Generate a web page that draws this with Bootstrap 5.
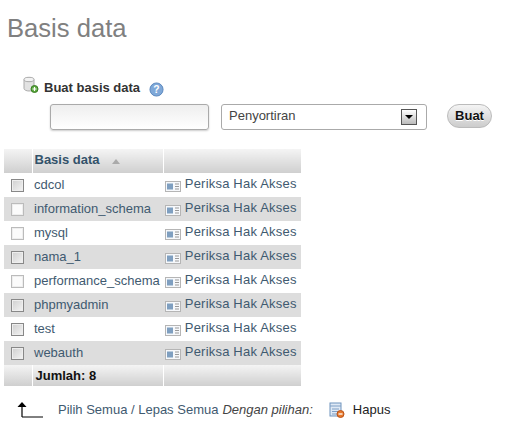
<!DOCTYPE html>
<html lang="id">
<head>
<meta charset="utf-8">
<title>Basis data</title>
<link href="https://cdn.jsdelivr.net/npm/bootstrap@5.3.0/dist/css/bootstrap.min.css" rel="stylesheet">
<style>
html,body{margin:0;background:#fff;overflow:hidden}
body{font-family:"Liberation Sans",Arial,sans-serif;font-size:13px;color:#222;height:429px;width:523px}
.pagebox{padding:13px 0 0 7px}
.pagetitle{font-size:25.6px;line-height:30px;font-weight:400;color:#808080;margin:0}
.createhead{margin:34px 0 0 16px;height:22px;gap:5px;font-weight:700;color:#333}
.dbicon{margin-top:-6px}
.helpicon{margin:3px 0 0 4px}
.createrow{margin:4px 0 0 43px;height:27px}
.dbname{width:159px;height:26px;border:1px solid #aaa;border-radius:3px;background:linear-gradient(#eee,#fff);box-shadow:0 1px 2px #ccc;padding:0 4px;margin-right:12px}
.collation{width:206px;height:26px;border:1px solid #aaa;border-radius:3px;padding:0 7px 2px;color:#444;justify-content:space-between}
.arrowbox{width:16px;height:16px;border:1px solid #555;background:linear-gradient(#fff,#bbb);margin:2px 2px 0 0}
.arrowtip{width:0;height:0;border-left:4px solid transparent;border-right:4px solid transparent;border-top:4px solid #000}
.gobtn{margin:-1px 0 0 20px;width:45px;height:24px;border:1px solid #bbb;border-radius:12px;background:linear-gradient(#f4f4f4,#ccc);font-weight:700;font-size:13px;color:#111;padding:0;line-height:20px;text-shadow:0 1px 0 #fff}
.dbtable{margin:19px 0 0 -3px;width:297px;border-collapse:collapse;table-layout:fixed;color:#3f5a70}
.tickcol{width:28px}
.namecol{width:131px}
.dbtable th{background:linear-gradient(#f4f4f4,#cfcfcf);border-right:1px solid #fff;padding:0 0 0 3px;font-size:13px;vertical-align:middle}
.dbtable td{height:24px;padding:0 0 0 2px;vertical-align:middle;white-space:nowrap}
.dbtable th:last-child{border-right:0}
.dbtable thead th{height:24px;padding-bottom:3px}
.dbtable thead .colname{padding-left:2px;color:#33526a}
.dbtable tfoot th{height:21px;color:#111}
.dbtable .linkcell{padding-bottom:2px;letter-spacing:.2px}
.cardimg{vertical-align:-4px}
.evenrow td{background:#ddd}
.tick{display:block;margin-left:5px;width:13px;height:13px;border:1px solid #888;background:linear-gradient(135deg,#cfcfcf,#f4f4f4);box-shadow:inset 0 0 0 1px #eee}
.tick.soft{border-color:#bbb;background:#fbfbfb}
.sorttip{display:inline-block;margin-left:9px;width:0;height:0;border-left:4px solid transparent;border-right:4px solid transparent;border-bottom:5px solid #aaa}
.bottomrow{margin:13px 0 0 8px;height:22px;color:#3f5a70}
.bottomrow em{color:#444;margin-left:4px}
.hapus{color:#222;margin-left:8px}
.arrowimg{margin-right:15px}
.trashimg{margin-left:16px}
</style>
</head>
<body>
<div class="pagebox">
  <h1 class="pagetitle">Basis data</h1>
  <div class="createhead d-flex align-items-center">
    <svg class="dbicon" width="16" height="18" viewBox="0 0 16 18"><path d="M1 3.500v9c0 1.500 2.500 2.500 5 2.500s5-1 5-2.500v-9z" fill="#e2e2e2" stroke="#aaa"/><ellipse cx="6" cy="3.500" rx="5" ry="2.200" fill="#f2f2f2" stroke="#aaa"/><circle cx="11.500" cy="13" r="3.500" fill="#5aa83c" stroke="#3a7d24"/><path d="M9.500 13h4M11.500 11v4" stroke="#fff" stroke-width="1.200"/></svg>
    <span>Buat basis data</span>
    <svg class="helpicon" width="15" height="15" viewBox="0 0 16 16"><circle cx="8" cy="8" r="7" fill="#7fa8d8" stroke="#5a86bd"/><text x="8" y="12" text-anchor="middle" font-size="11" font-weight="700" font-family="Liberation Sans" fill="#fff">?</text></svg>
  </div>
  <div class="createrow d-flex align-items-center">
    <div class="dbname"></div>
    <div class="collation d-flex align-items-center"><span>Penyortiran</span><span class="arrowbox d-flex align-items-center justify-content-center"><span class="arrowtip"></span></span></div>
    <button type="button" class="gobtn">Buat</button>
  </div>
  <table class="dbtable">
    <colgroup><col class="tickcol"><col class="namecol"><col></colgroup>
    <thead><tr><th></th><th class="colname">Basis data <span class="sorttip"></span></th><th></th></tr></thead>
    <tbody>
      <tr><td><span class="tick"></span></td><td>cdcol</td><td class="linkcell"><svg class="cardimg" width="16" height="11" viewBox="0 0 16 11"><rect x=".5" y=".5" width="15" height="10" fill="#f6f8fb" stroke="#b5b5b5"/><rect x="2" y="2.500" width="6" height="6" fill="#7f9fc0"/><path d="M10 3h4M10 5.500h4M10 8h4" stroke="#999"/></svg> Periksa Hak Akses</td></tr>
      <tr class="evenrow"><td><span class="tick soft"></span></td><td>information_schema</td><td class="linkcell"><svg class="cardimg" width="16" height="11" viewBox="0 0 16 11"><rect x=".5" y=".5" width="15" height="10" fill="#f6f8fb" stroke="#b5b5b5"/><rect x="2" y="2.500" width="6" height="6" fill="#7f9fc0"/><path d="M10 3h4M10 5.500h4M10 8h4" stroke="#999"/></svg> Periksa Hak Akses</td></tr>
      <tr><td><span class="tick soft"></span></td><td>mysql</td><td class="linkcell"><svg class="cardimg" width="16" height="11" viewBox="0 0 16 11"><rect x=".5" y=".5" width="15" height="10" fill="#f6f8fb" stroke="#b5b5b5"/><rect x="2" y="2.500" width="6" height="6" fill="#7f9fc0"/><path d="M10 3h4M10 5.500h4M10 8h4" stroke="#999"/></svg> Periksa Hak Akses</td></tr>
      <tr class="evenrow"><td><span class="tick"></span></td><td>nama_1</td><td class="linkcell"><svg class="cardimg" width="16" height="11" viewBox="0 0 16 11"><rect x=".5" y=".5" width="15" height="10" fill="#f6f8fb" stroke="#b5b5b5"/><rect x="2" y="2.500" width="6" height="6" fill="#7f9fc0"/><path d="M10 3h4M10 5.500h4M10 8h4" stroke="#999"/></svg> Periksa Hak Akses</td></tr>
      <tr><td><span class="tick soft"></span></td><td>performance_schema</td><td class="linkcell"><svg class="cardimg" width="16" height="11" viewBox="0 0 16 11"><rect x=".5" y=".5" width="15" height="10" fill="#f6f8fb" stroke="#b5b5b5"/><rect x="2" y="2.500" width="6" height="6" fill="#7f9fc0"/><path d="M10 3h4M10 5.500h4M10 8h4" stroke="#999"/></svg> Periksa Hak Akses</td></tr>
      <tr class="evenrow"><td><span class="tick"></span></td><td>phpmyadmin</td><td class="linkcell"><svg class="cardimg" width="16" height="11" viewBox="0 0 16 11"><rect x=".5" y=".5" width="15" height="10" fill="#f6f8fb" stroke="#b5b5b5"/><rect x="2" y="2.500" width="6" height="6" fill="#7f9fc0"/><path d="M10 3h4M10 5.500h4M10 8h4" stroke="#999"/></svg> Periksa Hak Akses</td></tr>
      <tr><td><span class="tick"></span></td><td>test</td><td class="linkcell"><svg class="cardimg" width="16" height="11" viewBox="0 0 16 11"><rect x=".5" y=".5" width="15" height="10" fill="#f6f8fb" stroke="#b5b5b5"/><rect x="2" y="2.500" width="6" height="6" fill="#7f9fc0"/><path d="M10 3h4M10 5.500h4M10 8h4" stroke="#999"/></svg> Periksa Hak Akses</td></tr>
      <tr class="evenrow"><td><span class="tick"></span></td><td>webauth</td><td class="linkcell"><svg class="cardimg" width="16" height="11" viewBox="0 0 16 11"><rect x=".5" y=".5" width="15" height="10" fill="#f6f8fb" stroke="#b5b5b5"/><rect x="2" y="2.500" width="6" height="6" fill="#7f9fc0"/><path d="M10 3h4M10 5.500h4M10 8h4" stroke="#999"/></svg> Periksa Hak Akses</td></tr>
    </tbody>
    <tfoot><tr><th></th><th>Jumlah: 8</th><th></th></tr></tfoot>
  </table>
  <div class="bottomrow d-flex align-items-center">
    <svg class="arrowimg" width="28" height="16" viewBox="0 0 28 16"><path d="M7 15V4" stroke="#000" stroke-width="1.200"/><path d="M7 15h21" stroke="#000"/><path d="M2.500 5L7 0l4.500 5z" fill="#000"/></svg>
    <span>Pilih Semua / Lepas Semua</span><em>Dengan pilihan:</em>
    <svg class="trashimg" width="16" height="16" viewBox="0 0 16 16"><rect x="1" y="1" width="11" height="13" fill="#dfe9f5" stroke="#6f93bd"/><path d="M1 4h11M3 7h7M3 9.500h7M3 12h7" stroke="#7f9fc5"/><circle cx="11.500" cy="12" r="3.500" fill="#e8782a" stroke="#b9531a"/><path d="M9.500 12h4" stroke="#fff" stroke-width="1.300"/></svg>
    <span class="hapus">Hapus</span>
  </div>
</div>
</body>
</html>
